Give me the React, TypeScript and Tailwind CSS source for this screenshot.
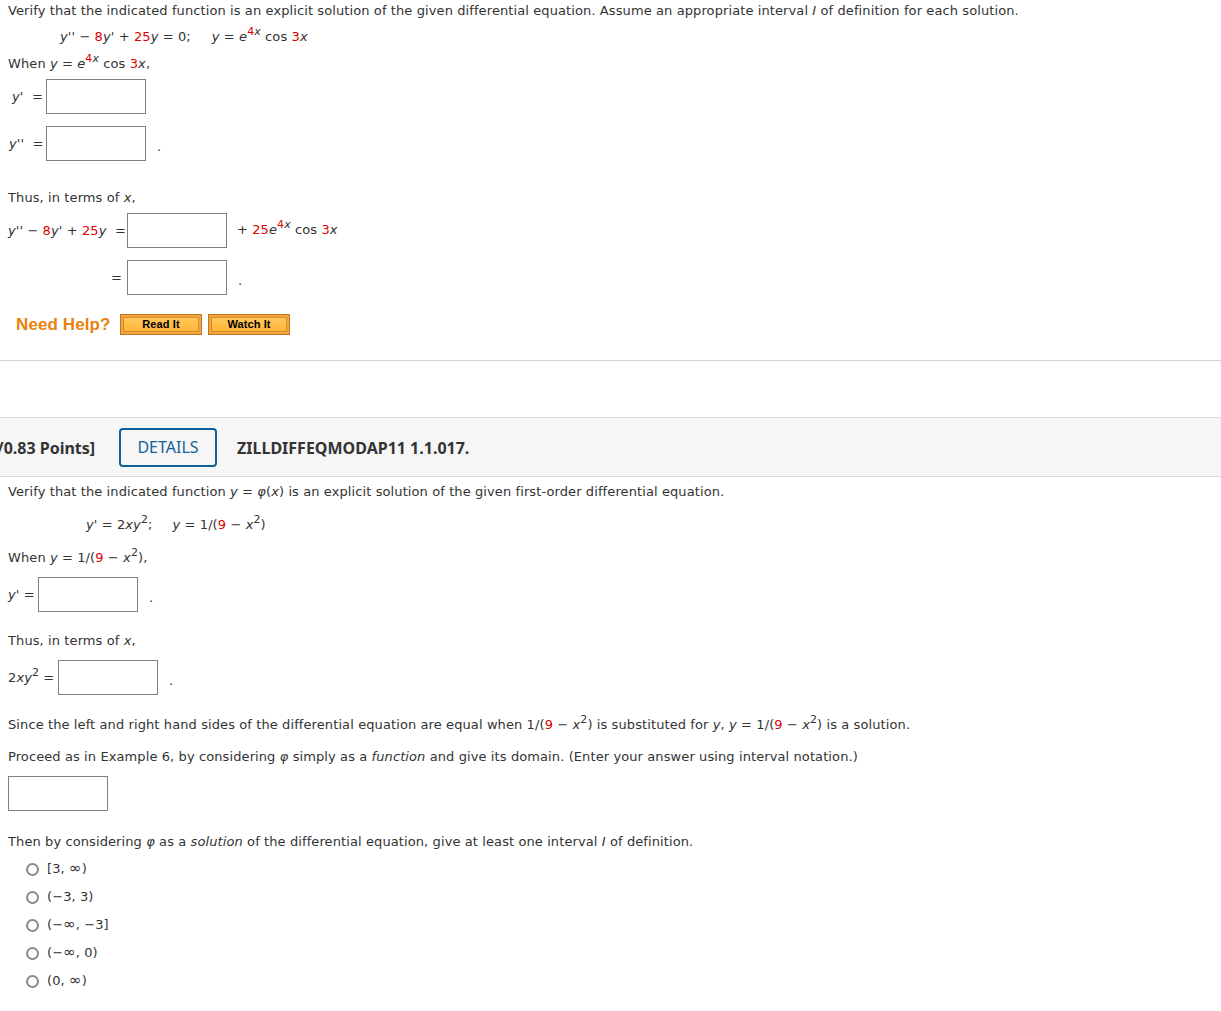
import React from 'react';

const R = ({ children }: { children: React.ReactNode }) => <span className="text-[#e00000]">{children}</span>;
const V = ({ children }: { children: React.ReactNode }) => <i>{children}</i>;
const Sup = ({ children }: { children: React.ReactNode }) => (
  <sup className="text-[11px] relative -top-[6px]">{children}</sup>
);

const Box = ({ w = 100 }: { w?: number }) => (
  <div className="h-[35px] border border-[#808080] bg-white shrink-0" style={{ width: w }} />
);

const Dot = ({ ml }: { ml: string }) => <span className={`${ml} mt-[6px]`}>.</span>;

const HelpButton = ({ label }: { label: string }) => (
  <div className="h-[21px] w-[82px] border border-[#c0761c] bg-[#f2a540] p-[2px]">
    <div className="h-full w-full border border-[#d98a2a] bg-gradient-to-b from-[#ffc95a] to-[#ffb637] flex items-center justify-center">
      <span className="font-['Liberation_Sans',Arial,sans-serif] font-bold text-[11px] text-black leading-none">{label}</span>
    </div>
  </div>
);

const Inf = () => <span className="text-[15px] leading-none">∞</span>;

const Radio = ({ label, first }: { label: React.ReactNode; first?: boolean }) => (
  <div className={`flex items-center h-[20px] pl-[26px] ${first ? 'mt-[7px]' : 'mt-[8px]'}`}>
    <span className="w-[13px] h-[13px] rounded-full border-2 border-[#8a8a8a] bg-white shrink-0" />
    <span className="ml-[8px] whitespace-pre">{label}</span>
  </div>
);

export default function App() {
  return (
    <div className="w-[1221px] min-h-[1011px] pt-[1px] bg-white text-[#333] text-[13px] leading-[20px] font-['DejaVu_Sans',Verdana,sans-serif] tracking-[0.1px]">
      {/* Question 1 */}
      <div className="h-[20px] pl-[8px] flex items-center whitespace-nowrap">
        Verify that the indicated function is an explicit solution of the given differential equation. Assume an appropriate interval&nbsp;<V>I</V>&nbsp;of definition for each solution.
      </div>
      <div className="h-[20px] mt-[6px] pl-[60px] flex items-center whitespace-pre">
        <span><V>y</V>'' − <R>8</R><V>y</V>' + <R>25</R><V>y</V> = 0;</span>
        <span className="ml-[21px]"><V>y</V> = <V>e</V><Sup><R>4</R><V>x</V></Sup> cos <R>3</R><V>x</V></span>
      </div>
      <div className="h-[20px] mt-[7px] pl-[8px] flex items-center whitespace-pre">
        <span>When <V>y</V> = <V>e</V><Sup><R>4</R><V>x</V></Sup> cos <R>3</R><V>x</V>,</span>
      </div>
      <div className="h-[35px] mt-[5px] flex items-center">
        <span className="w-[46px] pl-[12px] whitespace-pre"><V>y</V>' &nbsp;=</span>
        <Box />
      </div>
      <div className="h-[35px] mt-[12px] flex items-center">
        <span className="w-[46px] pl-[9px] whitespace-pre"><V>y</V>'' &nbsp;=</span>
        <Box />
        <Dot ml="ml-[11px]" />
      </div>
      <div className="h-[20px] mt-[27px] pl-[8px] flex items-center">
        <span>Thus, in terms of <V>x</V>,</span>
      </div>
      <div className="h-[35px] mt-[5px] flex items-center">
        <span className="w-[127px] pl-[8px] whitespace-pre"><V>y</V>'' − <R>8</R><V>y</V>' + <R>25</R><V>y</V> &nbsp;=</span>
        <Box />
        <span className="ml-[10px] whitespace-pre self-start mt-[7px]">+ <R>25</R><V>e</V><Sup><R>4</R><V>x</V></Sup> cos <R>3</R><V>x</V></span>
      </div>
      <div className="h-[35px] mt-[12px] flex items-center">
        <span className="w-[127px] pl-[111px]">=</span>
        <Box />
        <Dot ml="ml-[11px]" />
      </div>
      <div className="h-[21px] mt-[19px] flex items-center">
        <span className="pl-[16px] w-[120px] font-['Liberation_Sans',Arial,sans-serif] font-bold text-[17px] text-[#e8820c]">Need Help?</span>
        <HelpButton label="Read It" />
        <div className="ml-[6px]"><HelpButton label="Watch It" /></div>
      </div>
      <div className="mt-[25px] border-t border-[#d4d4d4]" />

      {/* Question 2 header */}
      <div className="mt-[56px] h-[60px] border-y border-[#dcdcdc] bg-[#f6f6f6] flex items-center font-['Noto_Sans','Open_Sans',sans-serif] font-bold text-[16px] text-[#333] tracking-normal">
        <span className="w-[119px] -ml-[3px] pt-[1px]">/0.83 Points]</span>
        <div className="ml-[3px] w-[98px] h-[39px] border-2 border-[#0f609b] rounded-[4px] flex items-center justify-center font-normal text-[#14619a]">DETAILS</div>
        <span className="ml-[20px] pt-[1px]">ZILLDIFFEQMODAP11 1.1.017.</span>
      </div>

      {/* Question 2 body */}
      <div className="h-[20px] mt-[5px] pl-[8px] flex items-center whitespace-nowrap">
        Verify that the indicated function&nbsp;<V>y</V>&nbsp;=&nbsp;<V>φ</V>(<V>x</V>)&nbsp;is an explicit solution of the given first-order differential equation.
      </div>
      <div className="h-[20px] mt-[13px] pl-[86px] flex items-center whitespace-pre">
        <span><V>y</V>' = 2<V>xy</V><Sup>2</Sup>;</span>
        <span className="ml-[20px]"><V>y</V> = 1/(<R>9</R> − <V>x</V><Sup>2</Sup>)</span>
      </div>
      <div className="h-[20px] mt-[13px] pl-[8px] flex items-center whitespace-pre">
        <span>When <V>y</V> = 1/(<R>9</R> − <V>x</V><Sup>2</Sup>),</span>
      </div>
      <div className="h-[35px] mt-[9px] flex items-center">
        <span className="w-[38px] pl-[8px] whitespace-pre"><V>y</V>' =</span>
        <Box />
        <Dot ml="ml-[11px]" />
      </div>
      <div className="h-[20px] mt-[19px] pl-[8px] flex items-center">
        <span>Thus, in terms of <V>x</V>,</span>
      </div>
      <div className="h-[35px] mt-[9px] flex items-center">
        <span className="w-[58px] pl-[8px] whitespace-pre">2<V>xy</V><Sup>2</Sup> =</span>
        <Box />
        <Dot ml="ml-[11px]" />
      </div>
      <div className="h-[20px] mt-[20px] pl-[8px] flex items-center whitespace-pre">
        <span>Since the left and right hand sides of the differential equation are equal when 1/(<R>9</R> − <V>x</V><Sup>2</Sup>) is substituted for <V>y</V>, <V>y</V> = 1/(<R>9</R> − <V>x</V><Sup>2</Sup>) is a solution.</span>
      </div>
      <div className="h-[20px] mt-[12px] pl-[8px] flex items-center whitespace-pre">
        <span>Proceed as in Example 6, by considering <V>φ</V> simply as a <V>function</V> and give its domain. (Enter your answer using interval notation.)</span>
      </div>
      <div className="mt-[9px] pl-[8px]">
        <Box />
      </div>
      <div className="h-[20px] mt-[21px] pl-[8px] flex items-center whitespace-pre">
        <span>Then by considering <V>φ</V> as a <V>solution</V> of the differential equation, give at least one interval <V>I</V> of definition.</span>
      </div>
      <Radio first label={<>[3, <Inf />)</>} />
      <Radio label="(−3, 3)" />
      <Radio label={<>(−<Inf />, −3]</>} />
      <Radio label={<>(−<Inf />, 0)</>} />
      <Radio label={<>(0, <Inf />)</>} />
    </div>
  );
}
